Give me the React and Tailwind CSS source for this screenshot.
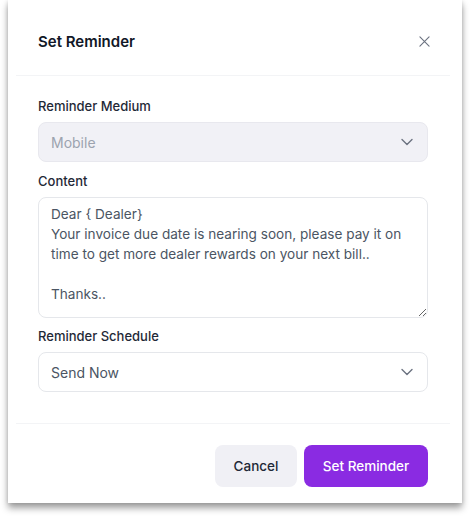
import React from "react";

function Chevron() {
  return (
    <svg width="12" height="8" viewBox="0 0 12 8" fill="none" stroke="#6b7280" strokeWidth="1.4" strokeLinecap="round" strokeLinejoin="round">
      <path d="M1 1.5l5 5 5-5" />
    </svg>
  );
}

export default function App() {
  const text = "Dear { Dealer}\nYour invoice due date is nearing soon, please pay it on time to get more dealer rewards on your next bill..\n\nThanks..";
  return (
    <div className="w-[470px] h-[518px] bg-white relative overflow-hidden" style={{ fontFamily: "Inter, 'Noto Sans', sans-serif" }}>
      <div className="ml-[8px] w-[454px] h-[503px] bg-white flex flex-col shadow-[0_5px_7px_rgba(0,0,0,0.38),0_0_4px_rgba(0,0,0,0.12)]">
        <div className="h-[76px] flex items-center justify-between pl-[22px] pr-[20px] pt-[8px] ml-[8px] mr-[12px] border-b border-[#f3f4f6]">
          <div className="text-[15px] leading-[20px] font-semibold text-[#111827]">Set Reminder</div>
          <svg width="11" height="11" viewBox="0 0 12 12" stroke="#6b7280" strokeWidth="1.2" strokeLinecap="round">
            <path d="M1 1l10 10M11 1L1 11" />
          </svg>
        </div>
        <div className="pl-[30px] pr-[34px] pt-[20px] pb-[31px] flex flex-col">
          <div className="text-[13px] leading-[20px] font-medium text-[#1f2937]">Reminder Medium</div>
          <div className="mt-[6px] h-[40px] rounded-[8px] bg-[#f1f1f6] border border-[#e8e8ee] flex items-center justify-between pl-[12px] pr-[14px]">
            <span className="text-[14px] text-[#9ca3af]">Mobile</span>
            <Chevron />
          </div>
          <div className="mt-[9px] text-[13px] leading-[20px] font-medium text-[#1f2937]">Content</div>
          <textarea
            readOnly
            defaultValue={text}
            className="mt-[6px] h-[121px] rounded-[8px] border border-[#e5e7eb] bg-white px-[12px] pt-[6px] text-[13.6px] leading-[20px] text-[#4b5563] outline-none resize-y"
            style={{ fontFamily: "Inter, 'Noto Sans', sans-serif" }}
          />
          <div className="mt-[8px] text-[13px] leading-[20px] font-medium text-[#1f2937]">Reminder Schedule</div>
          <div className="mt-[6px] h-[40px] rounded-[8px] bg-white border border-[#e5e7eb] flex items-center justify-between pl-[12px] pr-[14px]">
            <span className="text-[14px] text-[#4b5563]">Send Now</span>
            <Chevron />
          </div>
        </div>
        <div className="ml-[8px] mr-[12px] border-t border-[#f3f4f6] flex justify-end gap-[7px] pt-[21px] pr-[22px]">
          <button className="h-[42px] w-[82px] rounded-[8px] bg-[#f0f0f5] text-[13.5px] font-medium text-[#1f2937]">Cancel</button>
          <button className="h-[42px] w-[124px] rounded-[8px] bg-[#8a2be2] text-[13.5px] font-medium text-white">Set Reminder</button>
        </div>
      </div>
    </div>
  );
}
